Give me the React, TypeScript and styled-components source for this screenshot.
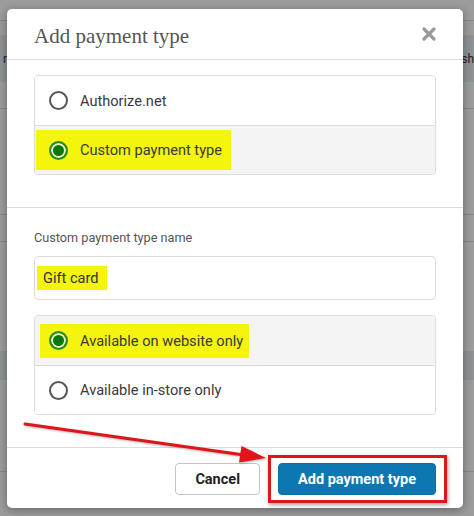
import styled, { createGlobalStyle } from "styled-components";

const GlobalStyle = createGlobalStyle`
    html, body {
        margin: 0;
        padding: 0;
        background: #9c9c9c;
        font-family: Roboto, "Liberation Sans", sans-serif;
    }
    * { box-sizing: border-box; }
`

const Page = styled.div`
    position: relative;
    width: 474px;
    height: 516px;
    overflow: hidden;
    background: #9c9c9c;
`

// faded table behind the dialog
const BackRow = styled.div<{ $h: number; $dark?: boolean; $line?: boolean }>`
    height: ${p => p.$h}px;
    background: ${p => (p.$dark ? "#8f9294" : "#9c9c9c")};
    border-bottom: ${p => (p.$line ? "1px solid #878787" : "none")};
    display: flex;
    align-items: center;
    justify-content: space-between;
    font-size: 12px;
    color: #1e1e1e;
`
const BackCellLeft = styled.span`
    width: 7px;
    display: flex;
    justify-content: flex-end;
`
const BackCellRight = styled.span`
    white-space: nowrap;
`

const Dialog = styled.div`
    position: absolute;
    left: 7px;
    top: 9px;
    width: 456px;
    background: #fff;
    border-radius: 5px;
    box-shadow: 0 2px 10px rgba(0, 0, 0, 0.35);
    display: flex;
    flex-direction: column;
`

const Header = styled.div`
    height: 51px;
    padding: 0 27px;
    border-bottom: 1px solid #dcdcdc;
    display: flex;
    align-items: center;
    justify-content: space-between;
`
const Title = styled.h2`
    margin: 0;
    font-family: "Liberation Serif", serif;
    font-weight: normal;
    font-size: 21px;
    color: #555;
    padding-top: 4px;
`
const CloseBtn = styled.button`
    border: none;
    background: none;
    padding: 0;
    width: 14px;
    height: 14px;
    display: flex;
    cursor: pointer;
`

const Section = styled.div<{ $top: number }>`
    padding: ${p => p.$top}px 27px 32px;
    border-bottom: 1px solid #dcdcdc;
    display: flex;
    flex-direction: column;
`

const Card = styled.div<{ $gapTop?: number }>`
    border: 1px solid #dcdcdc;
    border-radius: 4px;
    overflow: hidden;
    margin-top: ${p => p.$gapTop ?? 0}px;
`
const OptionRow = styled.label<{ $shaded?: boolean; $first?: boolean }>`
    height: 49px;
    padding-left: 14px;
    display: flex;
    align-items: center;
    background: ${p => (p.$shaded ? "#f4f4f4" : "#fff")};
    border-top: ${p => (p.$first ? "none" : "1px solid #dcdcdc")};
    cursor: pointer;
`
const Mark = styled.span<{ $inset: number; $h: number; $right: number }>`
    display: flex;
    align-items: center;
    height: ${p => p.$h}px;
    margin-left: -${p => p.$inset}px;
    padding-left: ${p => p.$inset}px;
    padding-right: ${p => p.$right}px;
    background: #f4f40c;
`
const Radio = styled.span<{ $on?: boolean }>`
    width: 19px;
    height: 19px;
    flex: none;
    border-radius: 50%;
    border: 2px solid ${p => (p.$on ? "#2b8a22" : "#555")};
    background: ${p => (p.$on ? "#0b760e" : "#fff")};
    box-shadow: ${p => (p.$on ? "inset 0 0 0 2px #e9f7c0" : "none")};
`
const OptionText = styled.span`
    margin-left: 12px;
    font-size: 14.6px;
    color: #3a3a3a;
    white-space: nowrap;
`

const FieldLabel = styled.div`
    font-size: 12.7px;
    line-height: 16px;
    color: #555;
    margin-bottom: 10px;
`
const TextBox = styled.div`
    height: 44px;
    border: 1px solid #dcdcdc;
    border-radius: 4px;
    display: flex;
    align-items: center;
    padding-left: 2px;
`
const InputMark = styled.span`
    height: 24px;
    display: flex;
    align-items: center;
    padding: 0 8px 0 6px;
    background: #f4f40c;
    font-size: 14.6px;
    color: #333;
`

const Footer = styled.div`
    padding: 7px 16px 5px 27px;
    display: flex;
    align-items: center;
    justify-content: flex-end;
    gap: 8px;
`
const Button = styled.button<{ $primary?: boolean }>`
    height: 32px;
    padding: 0 19px;
    border-radius: 4px;
    border: 1px solid ${p => (p.$primary ? "#0c6fa6" : "#c4c4c4")};
    background: ${p => (p.$primary ? "#0d77b1" : "#fff")};
    color: ${p => (p.$primary ? "#fff" : "#222")};
    font-family: Roboto, "Liberation Sans", sans-serif;
    font-weight: bold;
    font-size: 14.5px;
    cursor: pointer;
`
const CalloutBox = styled.div`
    padding: 5px 8px 5px 7px;
    border: 3px solid #e2141b;
    box-shadow: 1px 2px 4px rgba(0, 0, 0, 0.35);
    display: flex;
`
const Arrow = styled.svg`
    position: absolute;
    left: 0;
    top: 0;
    pointer-events: none;
    filter: drop-shadow(1px 1px 1px rgba(0, 0, 0, 0.3));
`

const backRows = [
    { h: 21, line: true },
    { h: 14 },
    { h: 47, dark: true, text: true },
    { h: 27, line: true },
    { h: 106, line: true },
    { h: 27, line: true },
    { h: 109 },
    { h: 29, dark: true },
    { h: 92, line: true },
    { h: 44 },
]

const App = () => {
    return (
        <Page>
            <GlobalStyle />
            {backRows.map((r, i) => (
                <BackRow key={i} $h={r.h} $dark={r.dark} $line={r.line}>
                    {r.text && (
                        <>
                            <BackCellLeft>r</BackCellLeft>
                            <BackCellRight>sh</BackCellRight>
                        </>
                    )}
                </BackRow>
            ))}

            <Dialog>
                <Header>
                    <Title>Add payment type</Title>
                    <CloseBtn aria-label="Close">
                        <svg width="14" height="14" viewBox="0 0 14 14">
                            <path d="M2 2 L12 12 M12 2 L2 12" stroke="#9a9a9a" strokeWidth="3.2" strokeLinecap="round" />
                        </svg>
                    </CloseBtn>
                </Header>

                <Section $top={15}>
                    <Card>
                        <OptionRow $first>
                            <Radio />
                            <OptionText>Authorize.net</OptionText>
                        </OptionRow>
                        <OptionRow $shaded>
                            <Mark $inset={13} $h={40} $right={9}>
                                <Radio $on />
                                <OptionText>Custom payment type</OptionText>
                            </Mark>
                        </OptionRow>
                    </Card>
                </Section>

                <Section $top={22}>
                    <FieldLabel>Custom payment type name</FieldLabel>
                    <TextBox>
                        <InputMark>Gift card</InputMark>
                    </TextBox>
                    <Card $gapTop={15}>
                        <OptionRow $first $shaded>
                            <Mark $inset={9} $h={34} $right={6}>
                                <Radio $on />
                                <OptionText>Available on website only</OptionText>
                            </Mark>
                        </OptionRow>
                        <OptionRow>
                            <Radio />
                            <OptionText>Available in-store only</OptionText>
                        </OptionRow>
                    </Card>
                </Section>

                <Footer>
                    <Button>Cancel</Button>
                    <CalloutBox>
                        <Button $primary>Add payment type</Button>
                    </CalloutBox>
                </Footer>
            </Dialog>

            <Arrow width="474" height="516" viewBox="0 0 474 516">
                <line x1="25" y1="424" x2="244" y2="455" stroke="#e2141b" strokeWidth="3" strokeLinecap="round" />
                <polygon points="266,458 239,462.5 241.5,446" fill="#e2141b" />
            </Arrow>
        </Page>
    );
}

export default App;
